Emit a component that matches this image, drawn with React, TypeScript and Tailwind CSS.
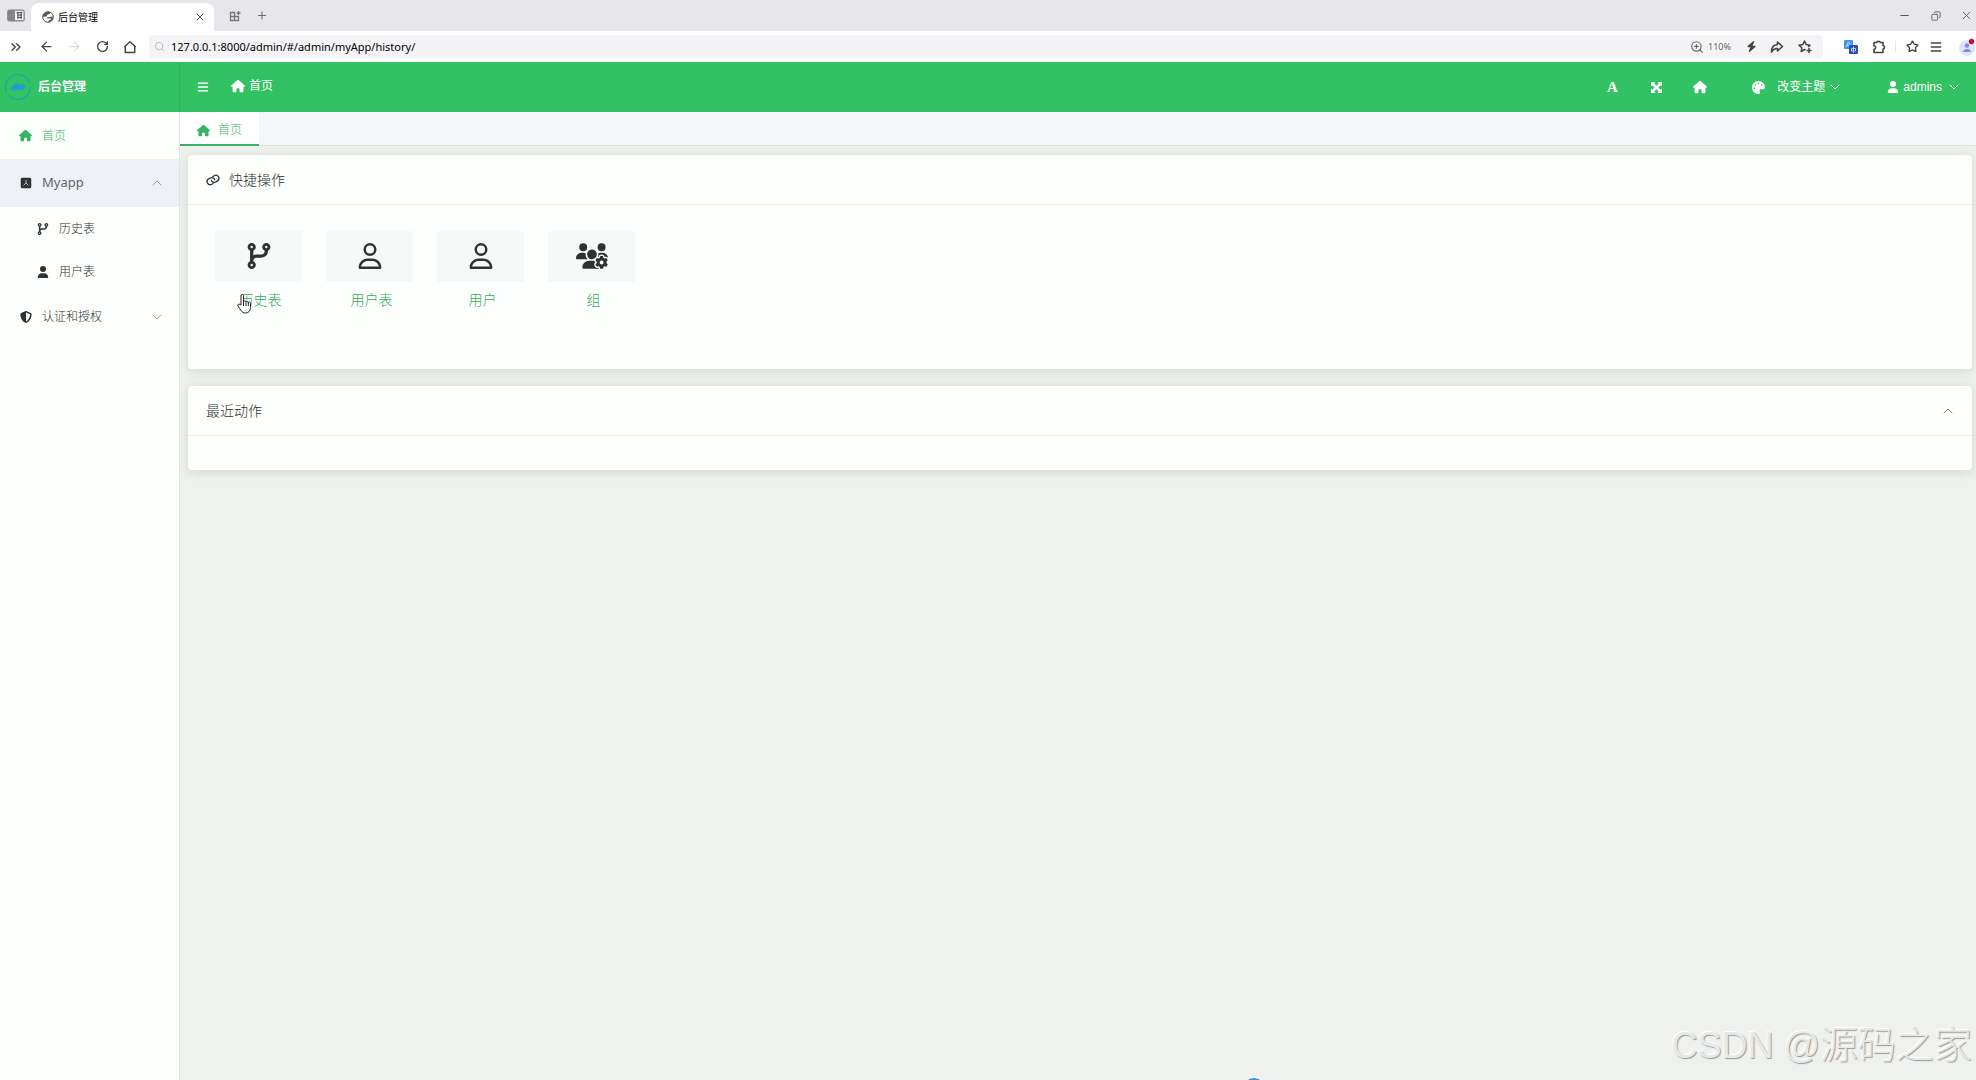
import type { ReactNode } from "react";
import {
  FaBars,
  FaCodeBranch,
  FaHouse,
  FaPalette,
  FaRegUser,
  FaShieldHalved,
  FaUser,
  FaUsersGear,
  FaBolt,
  FaSquare,
} from "react-icons/fa6";
import {
  ArrowLeft,
  ArrowRight,
  ChevronDown,
  ChevronUp,
  ChevronsRight,
  Copy,
  Menu,
  Minus,
  Plus,
  RotateCw,
  Search,
  Star,
  X,
  ZoomIn,
} from "lucide-react";

const TABS_ICON = (
  <svg viewBox="0 0 20 14" className="h-[13px] w-5">
    <rect x="0.5" y="0.5" width="19" height="13" rx="2.5" fill="#858585" />
    <path d="M9 2h9v10H9z" fill="#fff" />
    <path d="M10.500 4h6.500M12 3v8M15.500 3v8M12 6.500h4.500M12 9h4.500" stroke="#333" fill="none" />
  </svg>
);

function Globe() {
  return (
    <svg viewBox="0 0 12 12" className="size-3">
      <circle cx="6" cy="6" r="5.3" fill="#fff" stroke="#555" strokeWidth="1" />
      <path d="M1 4.500C2.500 1 6 .3 8.500 1.300L7.500 3 5.500 3.500 4.500 5.500 1 5.800z" fill="#555" />
      <path d="M5 6.500 11 5.500C11 9 9 10.800 6 11.200L7 9.200 9 8.500 8.500 7.200 5 7.500z" fill="#555" />
    </svg>
  );
}

function NewTabGrid() {
  return (
    <svg viewBox="0 0 12 12" className="size-3" fill="none" stroke="#777" strokeWidth="1.3">
      <path d="M1.500 2.500h4v8h-4zM1.500 6.500h8v4h-8" />
      <path d="M9.500 1v4M7.500 3h4" />
    </svg>
  );
}

function Home() {
  return (
    <svg viewBox="0 0 14 14" className="size-[14px]" fill="none" stroke="#444" strokeWidth="1.5" strokeLinejoin="round">
      <path d="M1.200 7 7 1.800 12.800 7M2.300 6.200v6.300h9.400V6.200" />
    </svg>
  );
}

function Share() {
  return (
    <svg viewBox="0 0 14 14" className="size-[14px]" fill="none" stroke="#444" strokeWidth="1.6" strokeLinejoin="round">
      <path d="M7.500 2 12.500 6.500l-5 4.500V8.500C4.500 8.200 3 9.500 1.500 12 1.500 7.500 4 4.800 7.500 4.500z" />
    </svg>
  );
}

function StarPlus() {
  return (
    <svg viewBox="0 0 14 14" className="size-[14px]" fill="none" stroke="#444" strokeWidth="1.500" strokeLinejoin="round">
      <path d="M7.500 10 6.500 9.500 3.200 11.500 3.800 7.700 1 5.200l3.800-.6L6.500 1l1.700 3.600 3.800.6-1.800 1.800" />
      <path d="M11 8v5M8.500 10.500h5" />
    </svg>
  );
}

function Puzzle() {
  return (
    <svg viewBox="0 0 14 14" className="size-[14px]" fill="none" stroke="#444" strokeWidth="1.600" strokeLinejoin="round">
      <path d="M2 2.500h2.700C5 .8 8 .8 8.300 2.500H11v3c2 .3 2 3.200 0 3.500v3.500H2V9.300c2.300-.3 2.300-3.300 0-3.600z" />
    </svg>
  );
}

function Translate() {
  return (
    <svg viewBox="0 0 14 14" className="size-[14px]">
      <rect width="9" height="9" rx="1" fill="#3b9be6" />
      <path d="M2 7 4.500 2l1.500 3M3 5.500h2" stroke="#b9e0ff" fill="none" />
      <rect x="5" y="5" width="9" height="9" rx="1" fill="#2a50c0" />
      <path d="M7.500 8.500h4V11h-4zM9.500 6.500v6" stroke="#dfe6ff" strokeWidth="0.8" fill="none" />
    </svg>
  );
}

function Avatar() {
  return (
    <svg viewBox="0 0 18 18" className="size-[18px]">
      <circle cx="9" cy="10" r="8" fill="#dfe4fb" />
      <circle cx="9" cy="7.500" r="2.200" fill="#7b8ce0" />
      <path d="M5 14c0-4 8-4 8 0z" fill="#7b8ce0" />
      <circle cx="13.500" cy="3.500" r="2.700" fill="#c8102e" />
    </svg>
  );
}

function Logo() {
  return (
    <svg viewBox="0 0 28 28" className="size-7" fill="none">
      <circle cx="14" cy="14" r="12.500" stroke="#28a89a" strokeWidth="1.600" strokeDasharray="30 4 40 5" />
      <path d="M9 17.500c-3 0-3-5 .5-5.500C11 9.500 14 10 15 12c3-3 7-.5 6 2.500-1 3-4 3-6 2-2 1.500-4 1.500-6 1z" fill="#1fa3c4" />
      <path d="M10.500 14.500c1-2 3-1.500 4 0s3 1 3.500-.5" stroke="#2b8fdc" strokeWidth="1.300" />
    </svg>
  );
}

function Expand() {
  return (
    <svg viewBox="0 0 12 12" className="size-[11px]" fill="#fff">
      <path d="M0 0h5L3.500 1.500 6 4l2.500-2.500L7 0h5v5l-1.500-1.500L8 6l2.500 2.500L12 7v5H7l1.500-1.500L6 8l-2.500 2.500L5 12H0V7l1.500 1.500L4 6 1.500 3.500 0 5z" />
    </svg>
  );
}

function AppIcon() {
  return (
    <span className="relative flex">
      <FaSquare className="size-3" />
      <svg viewBox="0 0 12 12" className="absolute inset-0 size-3" stroke="#bbb" fill="none">
        <path d="M6 3v3M6 6 3.500 8.500M6 6l2.500 2.500" />
      </svg>
    </span>
  );
}

function LinkIcon() {
  return (
    <svg viewBox="0 0 14 14" className="size-[14px]" fill="none" stroke="#303133" strokeWidth="1.300">
      <g transform="rotate(-30 7 7)">
        <path d="M5.800 10.100H3.800a3.100 3.100 0 0 1 0-6.200h1.900a3.100 3.100 0 0 1 2.900 4.100" />
        <path d="M8.200 3.900h2a3.100 3.100 0 0 1 0 6.200H8.300A3.100 3.100 0 0 1 5.400 6" />
      </g>
    </svg>
  );
}

function Pointer() {
  return (
    <svg viewBox="0 0 15 20" className="absolute top-0 left-[22px] h-5 w-[15px]" fill="#fff" stroke="#222" strokeLinejoin="round">
      <path d="M4 11V2c0-2 2.500-2 2.500 0v6c0-1.500 2.500-1.500 2.500.300 0-1.300 2.300-1.200 2.300.500 0-1.200 2.200-1 2.200.500v4c0 3.500-2 5.700-5 5.700-4 0-4.500-3-7.500-7-1-1.500 1-2.500 2-1.500z" />
      <path d="M6.500 8v4M9 8.500V12M11.300 9v3" fill="none" />
    </svg>
  );
}

function IconButton({ label, children, className = "" }: { label: string; children: ReactNode; className?: string }) {
  return (
    <button aria-label={label} className={`flex shrink-0 items-center justify-center ${className}`}>
      {children}
    </button>
  );
}

function BrowserChrome() {
  return (
    <div className="text-[#444]">
      <div className="flex h-[31px] items-end bg-[#e7e7eb]">
        <IconButton label="标签列表" className="h-[31px] w-[31px]">{TABS_ICON}</IconButton>
        <div className="flex h-7 w-[183px] items-center rounded-t-lg bg-white pr-[6px] pl-[11px] text-[10px] text-black">
          <Globe />
          <span className="ml-1 grow">后台管理</span>
          <IconButton label="关闭标签" className="size-4"><X size={12} color="#555" /></IconButton>
        </div>
        <IconButton label="标签组" className="h-[31px] w-[42px]"><NewTabGrid /></IconButton>
        <IconButton label="新建标签" className="h-[31px] w-3"><Plus size={13} color="#666" /></IconButton>
        <div className="ml-auto flex h-[31px] items-center">
          <IconButton label="最小化" className="w-[23px]"><Minus size={13} color="#555" /></IconButton>
          <IconButton label="还原" className="w-10"><Copy size={10} color="#555" className="-scale-x-100" /></IconButton>
          <IconButton label="关闭" className="w-5"><X size={13} strokeWidth={1.500} color="#555" /></IconButton>
        </div>
      </div>
      <div className="flex h-[31px] items-center bg-white">
        <div className="flex w-[149px] items-center">
          <IconButton label="展开" className="w-8"><ChevronsRight size={16} /></IconButton>
          <IconButton label="后退" className="w-7"><ArrowLeft size={15} /></IconButton>
          <IconButton label="前进" className="w-7 text-[#ddd]"><ArrowRight size={15} /></IconButton>
          <IconButton label="刷新" className="w-7"><RotateCw size={13} strokeWidth={2.500} /></IconButton>
          <IconButton label="主页" className="w-7"><Home /></IconButton>
        </div>
        <div className="flex h-[23px] grow items-center rounded bg-[#f4f4f7] pl-[5px]">
          <Search size={11} color="#bbb" />
          <input
            aria-label="网址"
            className="ml-1.5 min-w-0 grow bg-transparent pt-px text-[11px] text-black outline-none"
            defaultValue="127.0.0.1:8000/admin/#/admin/myApp/history/"
          />
          <ZoomIn size={14} color="#666" />
          <span className="ml-1 text-[9px] text-[#666]">110%</span>
          <IconButton label="极速" className="ml-2 w-6"><FaBolt size={11} /></IconButton>
          <IconButton label="分享" className="w-7"><Share /></IconButton>
          <IconButton label="收藏" className="mr-1 w-7"><StarPlus /></IconButton>
        </div>
        <div className="flex items-center">
          <IconButton label="翻译" className="ml-5 w-4"><Translate /></IconButton>
          <IconButton label="扩展" className="ml-3 w-4"><Puzzle /></IconButton>
          <span className="mx-2 h-3 w-px bg-gray-200" />
          <IconButton label="书签" className="w-4"><Star size={13} strokeWidth={2.500} /></IconButton>
          <IconButton label="菜单" className="ml-2 w-4"><Menu size={14} strokeWidth={2.500} /></IconButton>
          <IconButton label="用户" className="ml-[14px] w-[18px]"><Avatar /></IconButton>
        </div>
      </div>
    </div>
  );
}

function Header() {
  return (
    <header className="flex h-[50px] items-center bg-[#33c263] text-[12px] text-white">
      <div className="flex h-full w-[180px] shrink-0 items-center gap-[6px] border-r border-[#2eb65b] pl-1">
        <Logo />
        <h1 className="text-[12px] font-bold">后台管理</h1>
      </div>
      <IconButton label="折叠菜单" className="ml-[17px]"><FaBars size={12} /></IconButton>
      <a href="#home" className="ml-[22px] flex items-center gap-1 pb-0.5"><FaHouse size={14} />首页</a>
      <div className="ml-auto flex items-center">
        <IconButton label="字体" className="w-11 font-['Liberation_Serif',serif] text-[15px] font-bold">A</IconButton>
        <IconButton label="全屏" className="w-11"><Expand /></IconButton>
        <IconButton label="主页" className="w-11"><FaHouse size={14} /></IconButton>
        <button className="ml-[30px] flex items-center">
          <FaPalette size={13} />
          <span className="mr-0.5 ml-3">改变主题</span>
          <ChevronDown size={16} strokeWidth={1.500} />
        </button>
        <button className="mr-[14px] ml-11 flex items-center gap-1 font-['Liberation_Sans',Arial,sans-serif]">
          <FaUser size={12} />
          <span>admins</span>
          <ChevronDown size={16} strokeWidth={1.500} />
        </button>
      </div>
    </header>
  );
}

function Sidebar() {
  return (
    <nav className="w-[180px] shrink-0 border-r border-[#e2e4e6] bg-[#fdfffc] text-[12px] font-light text-[#303133]">
      <a href="#home" className="flex h-[47px] items-center gap-[10px] pl-[19px] text-[#35b563]"><FaHouse size={13} />首页</a>
      <button className="flex h-12 w-full items-center gap-[10px] bg-[#f0f1f6] pr-[14px] pl-5">
        <AppIcon />
        <span className="grow text-left text-[13px] font-normal text-[#606266]">Myapp</span>
        <ChevronUp size={16} strokeWidth={1} color="#777" />
      </button>
      <a href="#history" className="flex h-11 items-center gap-[10px] pl-[37px]"><FaCodeBranch size={12} />历史表</a>
      <a href="#users" className="flex h-[42px] items-center gap-[10px] pl-[37px]"><FaUser size={12} />用户表</a>
      <button className="flex h-[47px] w-full items-center gap-[10px] pr-[14px] pl-5">
        <FaShieldHalved size={12} />
        <span className="grow text-left">认证和授权</span>
        <ChevronDown size={16} strokeWidth={1} color="#777" />
      </button>
    </nav>
  );
}

const ACTIONS = [
  { name: "历史表", href: "#history", icon: <FaCodeBranch size={26} />, pointer: true },
  { name: "用户表", href: "#users", icon: <FaRegUser size={26} />, pointer: false },
  { name: "用户", href: "#auth-user", icon: <FaRegUser size={26} />, pointer: false },
  { name: "组", href: "#auth-group", icon: <FaUsersGear size={32} />, pointer: false },
];

export default function App() {
  return (
    <div className="flex min-h-screen flex-col overflow-hidden bg-[#eff1ef] font-['Noto_Sans','Noto_Sans_CJK_SC',sans-serif]">
      <BrowserChrome />
      <Header />
      <div className="flex grow">
        <Sidebar />
        <main className="relative flex min-w-0 grow flex-col">
          <div className="flex h-[34px] border-b border-[#dfe3e4] bg-[#f4f7f8]">
            <a href="#home" className="flex h-[34px] w-[79px] items-center gap-2 border-b-2 border-[#35b563] bg-white pt-1 pl-[17px] text-[12px] font-light text-[#35b563]">
              <FaHouse size={13} />首页
            </a>
          </div>
          <div className="flex flex-col gap-[17px] pt-[9px] pr-1 pl-2">
            <section className="rounded-sm bg-[#fdfffc] text-[14px] font-light text-[#303133] shadow-[0_2px_12px_rgba(0,0,0,0.12)]">
              <h2 className="flex h-[50px] items-center gap-[9px] border-b border-[#edefef] pl-[18px]"><LinkIcon />快捷操作</h2>
              <div className="flex h-[164px] gap-6 pt-[26px] pl-[27px]">
                {ACTIONS.map((a) => (
                  <a key={a.name} href={a.href} className="relative w-[87px] text-[#35a85f]">
                    <span className="flex h-[51px] items-center justify-center bg-[#f7f8f8] pb-0.5 text-[#2e3231]">{a.icon}</span>
                    <span className="relative block pt-2 pl-1 text-center leading-5">
                      {a.name}
                      {a.pointer && <span className="absolute top-3 left-0"><Pointer /></span>}
                    </span>
                  </a>
                ))}
              </div>
            </section>
            <section className="rounded-sm bg-[#fdfffc] text-[14px] font-light text-[#303133] shadow-[0_2px_12px_rgba(0,0,0,0.12)]">
              <div className="flex h-[50px] items-center justify-between border-b border-[#edefef] pr-4 pl-[18px]">
                <h2>最近动作</h2>
                <IconButton label="收起"><ChevronUp size={16} strokeWidth={1} /></IconButton>
              </div>
              <div className="h-[34px]" />
            </section>
          </div>
          <div className="absolute right-1 bottom-2 font-['Liberation_Sans','Noto_Sans_CJK_SC',sans-serif] text-[36px] leading-[52px] font-light whitespace-nowrap text-[#e7e9e8] [text-shadow:1px_1px_1px_#999,-1px_-1px_1px_#fff]">
            CSDN @<span className="text-[38px]">源码之家</span>
          </div>
          <div className="absolute bottom-0 left-[1062px] h-[3px] w-6 overflow-hidden">
            <div className="size-6 rounded-full border border-white bg-[#3f8ae8]" />
          </div>
        </main>
      </div>
    </div>
  );
}
